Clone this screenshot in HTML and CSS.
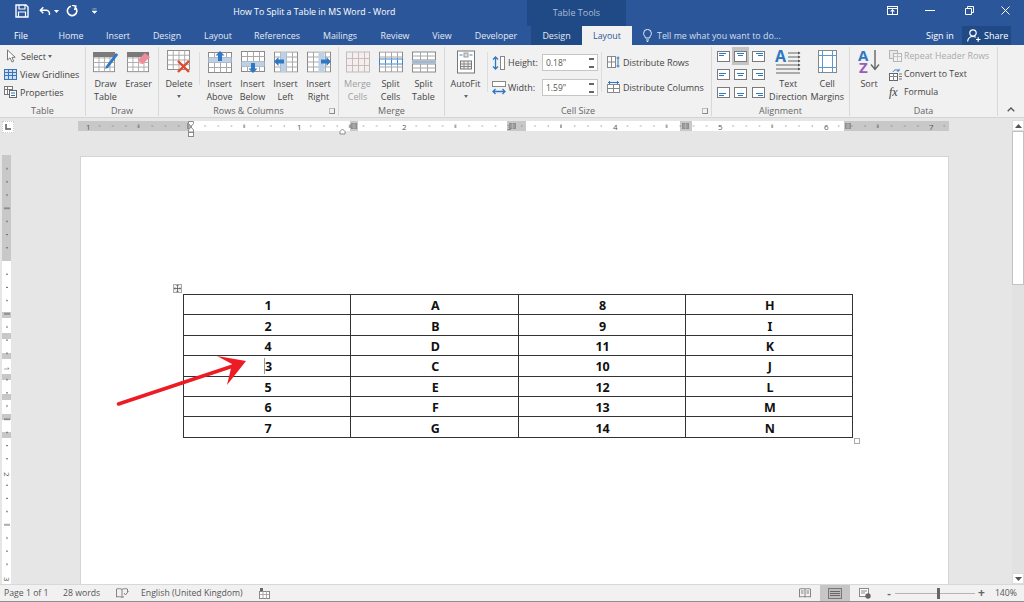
FILE: index.html
```html
<!DOCTYPE html>
<html lang="en">
<head>
<meta charset="utf-8">
<title>How To Split a Table in MS Word - Word</title>
<link rel="stylesheet" href="styles.css">
</head>
<body>
<svg class="defs" width="0" height="0" aria-hidden="true">
  <defs>
    <symbol id="grid" viewBox="0 0 24 21">
      <rect x=".5" y=".5" width="23" height="20" fill="#fff" stroke="#8a8a8a"/>
      <path d="M.5 5.5h23M.5 10.5h23M.5 15.5h23M6.5.5v20M12.5.5v20M18.5.5v20" stroke="#a8a8a8" fill="none"/>
    </symbol>
    <symbol id="al" viewBox="0 0 13 11">
      <rect x=".5" y=".5" width="12" height="10" fill="#fff" stroke="#7a7a7a"/>
    </symbol>
  </defs>
</svg>

<header class="titlebar">
  <div class="toprow">
    <div class="qat">
      <svg class="ic-save" width="14" height="14" viewBox="0 0 14 14"><path d="M1 1h10l2 2v10H1z" fill="none" stroke="#fff" stroke-width="1.4"/><path d="M4 1v4h6V1M3.500 13V8h7v5" fill="none" stroke="#fff" stroke-width="1.2"/></svg>
      <svg class="ic-undo" width="12" height="11" viewBox="0 0 14 12"><path d="M1.500 4.500h7a4 4 0 0 1 3.500 5.500M5 1 1.500 4.500 5 8" fill="none" stroke="#fff" stroke-width="1.7"/></svg>
      <svg class="ic-drop" width="5" height="3" viewBox="0 0 5 3"><path d="M0 0h5L2.500 3z" fill="#fff"/></svg>
      <svg class="ic-redo" width="12" height="12" viewBox="0 0 12 12"><path d="M9.500 2.600A4.700 4.700 0 1 1 5 1.300M6 0 9.800 1.200 8.600 5" fill="none" stroke="#fff" stroke-width="1.600"/></svg>
      <svg class="ic-cust" width="5" height="6" viewBox="0 0 6 6"><path d="M.5 .5h5M0 3h6l-3 3z" fill="#fff" stroke="#fff" stroke-width=".6"/></svg>
    </div>
    <div class="doctitle">How To Split a Table in MS Word - Word</div>
    <div class="tooltitle">Table Tools</div>
    <div class="winctl">
      <svg width="11" height="9" viewBox="0 0 11 9"><rect x=".5" y=".5" width="10" height="8" fill="none" stroke="#fff"/><path d="M0 2.500h11" stroke="#fff"/><path d="M5.500 3 8 5.500H3zM5 5h1v3H5z" fill="#fff"/></svg>
      <svg class="c-min" width="10" height="1" viewBox="0 0 10 1"><path d="M0 .5h10" stroke="#fff"/></svg>
      <svg class="c-res" width="9" height="9" viewBox="0 0 9 9"><path d="M2.500 2V.5h6v6H7M.5 2.500h6v6h-6z" fill="none" stroke="#fff"/></svg>
      <svg class="c-cls" width="9" height="9" viewBox="0 0 9 9"><path d="M.5 .5l8 8M8.500 .5l-8 8" stroke="#fff"/></svg>
    </div>
  </div>
  <nav class="tabrow">
    <div class="tabs">
      <a class="tab tab-file">File</a><a class="tab">Home</a><a class="tab">Insert</a><a class="tab">Design</a><a class="tab">Layout</a><a class="tab">References</a><a class="tab">Mailings</a><a class="tab">Review</a><a class="tab">View</a><a class="tab">Developer</a><a class="tab tab-ctx">Design</a><a class="tab tab-active">Layout</a>
    </div>
    <div class="tell">
      <svg width="9" height="13" viewBox="0 0 9 13"><path d="M2.500 9C2 7 .6 6.500 .6 4.300a3.900 3.900 0 0 1 7.800 0C8.400 6.500 7 7 6.500 9zM3 11h3M3.800 12.500h1.400" fill="none" stroke="#fff" stroke-width=".9"/></svg>
      <span>Tell me what you want to do...</span>
    </div>
    <div class="signin">Sign in</div>
    <div class="share">
      <svg width="14" height="13" viewBox="0 0 14 13"><circle cx="6" cy="4" r="3.200" fill="none" stroke="#fff" stroke-width="1.200"/><path d="M.6 12.500c.4-3 2.500-5 5.400-5 1.300 0 2 .3 2.800.8M9 10.500h4.500M11.200 8.300v4.500" fill="none" stroke="#fff" stroke-width="1.200"/></svg>
      <span>Share</span>
    </div>
  </nav>
</header>

<section class="ribbon">
  <div class="group g-table">
    <div class="tools tools-col">
      <div class="small"><svg class="smi" width="10" height="14" viewBox="0 0 10 14"><path d="M1.500 1v10l2.500-2.200L6 13l1.700-.8L6 8.300h3.200z" fill="#fff" stroke="#777"/></svg><span class="sel">Select</span><i class="caret-d"></i></div>
      <div class="small"><svg class="smi" width="13" height="11" viewBox="0 0 13 11"><rect x=".5" y=".5" width="12" height="10" fill="#cfe0f2" stroke="#3b74b8"/><path d="M.5 3.500h12M.5 6.500h12M4.500 .5v10M8.500 .5v10" stroke="#3b74b8" fill="none"/></svg><span>View Gridlines</span></div>
      <div class="small"><svg class="smi" width="13" height="12" viewBox="0 0 13 12"><rect x=".5" y=".5" width="8" height="8" fill="#fff" stroke="#777"/><path d="M.5 3.500h8M3.500 .5v8" stroke="#777"/><rect x="5.500" y="4.500" width="7" height="7" fill="#fff" stroke="#666"/><path d="M7 7h4M7 9.500h4" stroke="#2f6fb5"/></svg><span>Properties</span></div>
    </div>
    <div class="glabel">Table</div>
  </div>

  <div class="group g-draw">
    <div class="tools">
      <div class="big"><svg width="26" height="22" viewBox="0 0 26 22"><use href="#grid" x="0" y="1" width="22" height="21"/><rect x="0" y="1" width="22" height="5" fill="#7a7a7a"/><path d="M13 15 23 2l2.200 1.700-10 13-3 1.300z" fill="#2f78c4"/></svg><span>Draw<br>Table</span></div>
      <div class="big"><svg width="24" height="22" viewBox="0 0 24 22"><use href="#grid" x="0" y="1" width="22" height="21"/><rect x="0" y="1" width="22" height="5" fill="#7a7a7a"/><path d="M11 9 18 2l5 4-7 7h-3z" fill="#ee8c9c"/><path d="M11 9l4 4h-2z" fill="#f7c6cd"/></svg><span>Eraser</span></div>
    </div>
    <div class="glabel">Draw</div>
  </div>

  <div class="group g-rows">
    <div class="tools">
      <div class="big big-del"><svg width="26" height="24" viewBox="0 0 26 24"><use href="#grid" x="1" y="0" width="23" height="20"/><path d="M12 11l11 11M23 11 12 22" stroke="#e0492e" stroke-width="2.400"/></svg><span>Delete</span><i class="caret-d mid"></i></div>
      <i class="vdiv"></i>
      <div class="big"><svg width="24" height="22" viewBox="0 0 24 22"><use href="#grid" x="0" y="1" width="24" height="21"/><rect x=".5" y="6.500" width="23" height="5" fill="#bcd0e6"/><path d="M12 0l4.500 4.500H14V10h-4V4.500H7.500z" fill="#2f78c4"/></svg><span>Insert<br>Above</span></div>
      <div class="big"><svg width="24" height="22" viewBox="0 0 24 22"><use href="#grid" x="0" y="0" width="24" height="21"/><rect x=".5" y="10.500" width="23" height="5" fill="#bcd0e6"/><path d="M12 22l-4.500-4.500H10V12h4v5.500h2.500z" fill="#2f78c4"/></svg><span>Insert<br>Below</span></div>
      <div class="big"><svg width="24" height="21" viewBox="0 0 24 21"><use href="#grid" x="0" y="0" width="24" height="21"/><rect x="6.500" y=".5" width="6" height="20" fill="#bcd0e6"/><path d="M0 10l4.500-4.500V8H10v4H4.500v2.500z" fill="#2f78c4"/></svg><span>Insert<br>Left</span></div>
      <div class="big"><svg width="24" height="21" viewBox="0 0 24 21"><use href="#grid" x="0" y="0" width="24" height="21"/><rect x="11.500" y=".5" width="6" height="20" fill="#bcd0e6"/><path d="M24 10l-4.500-4.500V8H14v4h5.500v2.500z" fill="#2f78c4"/></svg><span>Insert<br>Right</span></div>
    </div>
    <div class="glabel">Rows &amp; Columns</div>
    <i class="launcher"></i>
  </div>

  <div class="group g-merge">
    <div class="tools">
      <div class="big off"><svg width="24" height="21" viewBox="0 0 24 21"><rect x=".5" y=".5" width="23" height="20" fill="#f4eeee" stroke="#bdbdbd"/><path d="M.5 7h23M.5 14h23M6.500 .5v20M12.500 .5v20M18.500 .5v20" stroke="#c9bcbc"/></svg><span>Merge<br>Cells</span></div>
      <div class="big"><svg width="24" height="21" viewBox="0 0 24 21"><use href="#grid" x="0" y="0" width="24" height="21"/><rect x=".5" y="7.500" width="23" height="5" fill="#fff" stroke="#3f86cf"/><path d="M6.500 8v4M12.500 8v4M18.500 8v4" stroke="#3f86cf"/></svg><span>Split<br>Cells</span></div>
      <div class="big"><svg width="24" height="21" viewBox="0 0 24 21"><rect x=".5" y=".5" width="23" height="8" fill="#fff" stroke="#8a8a8a"/><rect x=".5" y="12.500" width="23" height="8" fill="#fff" stroke="#8a8a8a"/><path d="M0 10.500h24" stroke="#3f86cf"/><path d="M8.500 .5v8M15.500 .5v8M8.500 12.500v8M15.500 12.500v8M.5 4.500h23M.5 16.500h23" stroke="#a8a8a8"/></svg><span>Split<br>Table</span></div>
    </div>
    <div class="glabel">Merge</div>
  </div>

  <div class="group g-size">
    <div class="tools">
      <div class="big big-fit"><svg width="18" height="23" viewBox="0 0 18 23"><rect x=".5" y=".5" width="17" height="22" fill="#fff" stroke="#777"/><path d="M2.500 4.500h3M12.500 4.500h3" stroke="#3f86cf"/><rect x="7" y="2.500" width="4" height="4" fill="#ddd" stroke="#999"/><rect x="3.500" y="10.500" width="11" height="8" fill="#eee" stroke="#777"/><path d="M3.500 13.500h11M3.500 16h11M7 10.500v8M11 10.500v8" stroke="#888"/></svg><span>AutoFit</span><i class="caret-d mid"></i></div>
      <i class="vdiv tall"></i>
      <div class="sizes">
        <div class="sizerow">
          <svg width="14" height="14" viewBox="0 0 14 14"><rect x="8.500" y=".5" width="4" height="13" fill="#fff" stroke="#888"/><path d="M3.500 1v12M1 3.500 3.500 1 6 3.500M1 10.500 3.500 13 6 10.500" fill="none" stroke="#2f78c4" stroke-width="1.300"/></svg>
          <label class="sizelab">Height:</label>
          <div class="spin"><span>0.18"</span><i class="updown"></i></div>
        </div>
        <div class="sizerow">
          <svg width="14" height="14" viewBox="0 0 14 14"><rect x=".5" y=".5" width="13" height="5" fill="#fff" stroke="#888"/><path d="M1 10.500h12M3.500 8 1 10.500 3.500 13M10.500 8 13 10.500 10.500 13" fill="none" stroke="#2f78c4" stroke-width="1.300"/></svg>
          <label class="sizelab">Width:</label>
          <div class="spin"><span>1.59"</span><i class="updown"></i></div>
        </div>
      </div>
      <i class="vdiv tall"></i>
      <div class="dists">
        <div class="small"><svg class="smi" width="13" height="12" viewBox="0 0 13 12"><rect x=".5" y=".5" width="8" height="11" fill="#fff" stroke="#888"/><path d="M.5 6h8M4.500 .5v11" stroke="#888"/><path d="M11 .5v11M9.500 2h3M9.500 10h3" stroke="#2f78c4"/></svg><span>Distribute Rows</span></div>
        <div class="small"><svg class="smi" width="13" height="12" viewBox="0 0 13 12"><rect x=".5" y="3.500" width="12" height="8" fill="#fff" stroke="#888"/><path d="M.5 7.500h12M6.500 3.500v8" stroke="#888"/><path d="M1 1.500h11M2.500 0v3M10.500 0v3" stroke="#2f78c4"/></svg><span>Distribute Columns</span></div>
      </div>
    </div>
    <div class="glabel">Cell Size</div>
    <i class="launcher"></i>
  </div>

  <div class="group g-align">
    <div class="tools">
      <div class="agrid">
        <div class="acell"><svg width="13" height="11" viewBox="0 0 13 11"><use href="#al" width="13" height="11"/><path d="M2 2.500h7M2 4.500h5" stroke="#2f78c4"/></svg></div>
        <div class="acell acell-on"><svg width="13" height="11" viewBox="0 0 13 11"><use href="#al" width="13" height="11"/><path d="M3 2.500h7M4 4.500h5" stroke="#2f78c4"/></svg></div>
        <div class="acell"><svg width="13" height="11" viewBox="0 0 13 11"><use href="#al" width="13" height="11"/><path d="M4 2.500h7M6 4.500h5" stroke="#2f78c4"/></svg></div>
        <div class="acell"><svg width="13" height="11" viewBox="0 0 13 11"><use href="#al" width="13" height="11"/><path d="M2 4.500h7M2 6.500h5" stroke="#2f78c4"/></svg></div>
        <div class="acell"><svg width="13" height="11" viewBox="0 0 13 11"><use href="#al" width="13" height="11"/><path d="M3 4.500h7M4 6.500h5" stroke="#2f78c4"/></svg></div>
        <div class="acell"><svg width="13" height="11" viewBox="0 0 13 11"><use href="#al" width="13" height="11"/><path d="M4 4.500h7M6 6.500h5" stroke="#2f78c4"/></svg></div>
        <div class="acell"><svg width="13" height="11" viewBox="0 0 13 11"><use href="#al" width="13" height="11"/><path d="M2 6.500h7M2 8.500h5" stroke="#2f78c4"/></svg></div>
        <div class="acell"><svg width="13" height="11" viewBox="0 0 13 11"><use href="#al" width="13" height="11"/><path d="M3 6.500h7M4 8.500h5" stroke="#2f78c4"/></svg></div>
        <div class="acell"><svg width="13" height="11" viewBox="0 0 13 11"><use href="#al" width="13" height="11"/><path d="M4 6.500h7M6 8.500h5" stroke="#2f78c4"/></svg></div>
      </div>
      <div class="big big-text"><svg width="26" height="31" viewBox="0 -6 26 31"><text class="a-glyph" x="0" y="13">A</text><path d="M13 4h12M13 8h12M13 12h12M1 16h24M1 20h24M1 24h24" stroke="#666" fill="none"/><path d="M23 2.500 25.500 4 23 5.500zM23 6.500 25.500 8 23 9.500zM23 10.500 25.500 12 23 13.500zM23 14.500 25.500 16 23 17.500zM23 18.500 25.500 20 23 21.500z" fill="#555"/></svg><span>Text<br>Direction</span></div>
      <div class="big big-cell"><svg width="19" height="23" viewBox="0 0 19 23"><rect x=".5" y=".5" width="18" height="22" fill="#fff" stroke="#888"/><path d="M4.500 .5v22M14.500 .5v22M.5 5.500h18M.5 17.500h18" stroke="#5c97d4"/></svg><span>Cell<br>Margins</span></div>
    </div>
    <div class="glabel">Alignment</div>
  </div>

  <div class="group g-data">
    <div class="tools">
      <div class="big big-sort"><svg width="22" height="34" viewBox="0 -6 22 34"><text class="az a1" x="0" y="12">A</text><text class="az z1" x="1" y="23.500">Z</text><path d="M17 1v19M13 15.500l4 5 4-5" fill="none" stroke="#666" stroke-width="1.400"/></svg><span>Sort</span></div>
      <div class="datacol">
        <div class="small off"><svg class="smi" width="13" height="12" viewBox="0 0 13 12"><rect x=".5" y=".5" width="8" height="8" fill="#e8e8e8" stroke="#b5b5b5"/><rect x="4.500" y="3.500" width="8" height="8" fill="#f3f3f3" stroke="#b5b5b5"/><path d="M4.500 6.500h8M8.500 3.500v8" stroke="#c5c5c5"/></svg><span>Repeat Header Rows</span></div>
        <div class="small"><svg class="smi" width="13" height="13" viewBox="0 0 13 13"><rect x=".5" y="5.500" width="8" height="7" fill="#fff" stroke="#666"/><path d="M.5 8.500h8M4.500 5.500v7" stroke="#888"/><path d="M4 4C5 1.500 8 1 10 3M10 .8V3H7.800" fill="none" stroke="#2f78c4"/><path d="M10 6h3M10 8.500h3M10 11h3" stroke="#777"/></svg><span>Convert to Text</span></div>
        <div class="small"><i class="fx">fx</i><span>Formula</span></div>
      </div>
    </div>
    <div class="glabel">Data</div>
  </div>

  <div class="collapse"><svg width="8" height="5" viewBox="0 0 8 5"><path d="M.7 4.300 4 1l3.300 3.300" fill="none" stroke="#555" stroke-width="1.300"/></svg></div>
</section>

<main class="workspace">
  <div class="corner"><div class="tabstop"><svg width="6" height="6" viewBox="0 0 6 6"><path d="M1 0v5h5" fill="none" stroke="#555" stroke-width="1.500"/></svg></div></div>
  <div class="hruler">
    <svg width="871" height="18" viewBox="0 0 871 18">
      <defs>
        <pattern id="ht" patternUnits="userSpaceOnUse" x="113.400" y="0" width="105.600" height="10">
          <path d="M13.200 5h1M26.400 5h1M39.600 5h1M66 5h1M79.200 5h1M92.400 5h1" stroke="#666"/><path d="M52.800 3.500v3.500" stroke="#555"/>
        </pattern>
      </defs>
      <rect x="0" y="0" width="113" height="10" fill="#c8c8c8"/>
      <rect x="113" y="0" width="159" height="10" fill="#fff"/>
      <rect x="272" y="0" width="8" height="10" fill="#c8c8c8"/>
      <rect x="280" y="0" width="149" height="10" fill="#fff"/>
      <rect x="429" y="0" width="19" height="10" fill="#c8c8c8"/>
      <rect x="448" y="0" width="154" height="10" fill="#fff"/>
      <rect x="602" y="0" width="12" height="10" fill="#c8c8c8"/>
      <rect x="614" y="0" width="152" height="10" fill="#fff"/>
      <rect x="766" y="0" width="105" height="10" fill="#c8c8c8"/>
      <rect x="0" y="0" width="871" height="10" fill="url(#ht)"/>
      <g class="rnum">
        <text x="8" y="8.500">1</text><text x="219" y="8.500">1</text><text x="324" y="8.500">2</text><text x="429" y="8.500">3</text><text x="535" y="8.500">4</text><text x="640" y="8.500">5</text><text x="746" y="8.500">6</text><text x="851" y="8.500">7</text>
      </g>
      <path d="M109 2h5v6h-5zM273 2h6v6h-6zM431 2h7v6h-7zM604 2h7v6h-7zM767 2h6v6h-6z" fill="#8f8f8f"/>
      <path d="M110 4h3M110 6h3M274 4h4M274 6h4M432 4h5M432 6h5M605 4h5M605 6h5M768 4h4M768 6h4M111.500 2v6M276 2v6M434.500 2v6M607.500 2v6M770 2v6" stroke="#c8c8c8" stroke-width=".5"/>
      <path d="M110.500 .5h5v2l-2.500 3-2.500-3zM113 6l2.500 3v2h-5V9z" fill="#fff" stroke="#8a8a8a"/>
      <rect x="110.500" y="11.500" width="5" height="4" fill="#fff" stroke="#8a8a8a"/>
      <path d="M262 10.500l2.500-2.500 2.500 2.500v2.500h-5z" fill="#fff" stroke="#8a8a8a"/>
    </svg>
  </div>
  <aside class="scroll">
    <div class="sc-btn"><svg width="7" height="4" viewBox="0 0 7 4"><path d="M3.500 0 7 4H0z" fill="#555"/></svg></div>
    <div class="sc-thumb"></div>
    <div class="sc-track"></div>
    <div class="sc-btn"><svg width="7" height="4" viewBox="0 0 7 4"><path d="M3.500 4 7 0H0z" fill="#555"/></svg></div>
  </aside>
  <div class="vruler">
    <svg width="10" height="430" viewBox="0 0 10 430">
      <defs>
        <pattern id="vt" patternUnits="userSpaceOnUse" x="0" y="106" width="10" height="105.500">
          <path d="M4 13.200h2M4 26.400h2M4 39.600h2M4 66h2M4 79.200h2M4 92.400h2" stroke="#666"/><path d="M2 52.800h6" stroke="#555"/>
        </pattern>
      </defs>
      <rect width="9" height="106" fill="#c8c8c8"/>
      <rect y="106" width="9" height="324" fill="#fff"/>
      <path d="M0 157h9v6H0zM0 178h9v6H0zM0 198h9v6H0zM0 219h9v6H0zM0 239h9v6H0zM0 259h9v6H0zM0 277h9v6H0z" fill="#c8c8c8"/>
      <rect width="10" height="430" fill="url(#vt)"/>
      <g class="rnum">
        <text transform="translate(2 211.500) rotate(90)">1</text>
        <text transform="translate(2 317) rotate(90)">2</text>
        <text transform="translate(2 422) rotate(90)">3</text>
      </g>
    </svg>
  </div>
  <div class="page">
    <div class="tablewrap">
      <span class="move"><svg width="7" height="7" viewBox="0 0 7 7"><path d="M3.500 0v7M0 3.500h7M2.500 1 3.500 0l1 1M2.500 6l1 1 1-1M1 2.500 0 3.500l1 1M6 2.500l1 1-1 1" fill="none" stroke="#555" stroke-width=".8"/></svg></span>
      <table class="doc">
        <tbody>
          <tr><td>1</td><td>A</td><td>8</td><td>H</td></tr>
          <tr><td>2</td><td>B</td><td>9</td><td>I</td></tr>
          <tr><td>4</td><td>D</td><td>11</td><td>K</td></tr>
          <tr><td><i class="ibeam"></i>3</td><td>C</td><td>10</td><td>J</td></tr>
          <tr><td>5</td><td>E</td><td>12</td><td>L</td></tr>
          <tr><td>6</td><td>F</td><td>13</td><td>M</td></tr>
          <tr><td>7</td><td>G</td><td>14</td><td>N</td></tr>
        </tbody>
      </table>
      <span class="resize"></span>
    </div>
    <svg class="arrow" width="145" height="65" viewBox="0 0 145 65"><path d="M8.500 58 123 20" stroke="#ed1c24" stroke-width="3.600" stroke-linecap="round"/><path d="M107 10l29 5-19 24 5-21z" fill="#ed1c24"/></svg>
  </div>
</main>

<footer class="status">
  <span class="st st-page">Page 1 of 1</span>
  <span class="st st-words">28 words</span>
  <svg class="st-book" width="13" height="10" viewBox="0 0 13 10"><path d="M6 1.500C5 .5 2 .5 .5 1v8C2 8.500 5 8.500 6 9.500M6 1.500V9.500M6 1.500C7 .5 10 .5 11.500 1v3M6 9.500c.5-.4 1-.6 2-.8M8 5l1.500 2L12.500 3" fill="none" stroke="#777" stroke-width=".9"/></svg>
  <span class="st st-lang">English (United Kingdom)</span>
  <svg class="st-macro" width="11" height="11" viewBox="0 0 11 11"><rect x=".5" y="3.500" width="10" height="7" fill="#fff" stroke="#888"/><path d="M.5 6.500h10M4 3.500v7M7.500 3.500v7" stroke="#aaa"/><rect x="1" y="0" width="3" height="3" fill="#666"/></svg>
  <div class="st-right">
    <svg class="vw-read" width="12" height="10" viewBox="0 0 12 10"><path d="M6 1C5 .5 2 .5 .5 1v8C2 8.500 5 8.500 6 9c1-.5 4-.5 5.500 0V1C10 .5 7 .5 6 1zM6 1v8M2 3h2.500M2 5h2.500M7.500 3H10M7.500 5H10" fill="none" stroke="#777" stroke-width=".9"/></svg>
    <div class="vw-print"><svg width="14" height="11" viewBox="0 0 14 11"><rect x=".5" y=".5" width="13" height="10" fill="#bdbdbd" stroke="#777"/><path d="M2 3.500h10M2 5.500h10M2 7.500h10" stroke="#666"/></svg></div>
    <svg class="vw-web" width="12" height="11" viewBox="0 0 12 11"><rect x=".5" y=".5" width="9" height="8" fill="#fff" stroke="#888"/><path d="M2 3h6M2 5h4" stroke="#888"/><circle cx="9" cy="8" r="2.700" fill="#666"/></svg>
    <span class="zm zm-minus">-</span>
    <div class="slider"><i class="thumb"></i></div>
    <span class="zm zm-plus">+</span>
    <span class="st zm-val">140%</span>
  </div>
</footer>
</body>
</html>
```

FILE: styles.css
```css
* { box-sizing: border-box; }
html, body { margin: 0; padding: 0; }
body {
  width: 1024px;
  height: 602px;
  overflow: hidden;
  display: flex;
  flex-direction: column;
  background: #e6e6e6;
  font-family: "Open Sans", "Noto Sans", sans-serif;
  font-size: 9px;
  color: #444;
}
svg { display: block; flex: none; }
.defs { position: absolute; }

/* title bar */
.titlebar { height: 45px; background: #2b579a; color: #fff; flex: none; }
.toprow { height: 26px; display: flex; align-items: stretch; }
.qat { width: 234px; display: flex; align-items: center; padding: 0 0 4px 15px; }
.ic-undo { margin-left: 10px; }
.ic-drop { margin-left: 3px; }
.ic-redo { margin-left: 7px; }
.ic-cust { margin-left: 14px; }
.doctitle { width: 297px; padding-left: 1px; line-height: 25px; font-size: 8.800px; color: #fff; }
.tooltitle { width: 100px; background: #1f4a85; color: #a9bcd8; text-align: center; line-height: 25px; font-size: 9px; }
.winctl { flex: 1; display: flex; align-items: center; padding: 0 14px 6px 261px; }
.c-min { margin-left: 27px; }
.c-res { margin-left: 30px; }
.c-cls { margin-left: 27px; }

.tabrow { height: 19px; display: flex; align-items: stretch; }
.tabs { display: grid; grid-template-columns: 45px 52px 42px 56px 46px 72px 54px 56px 38px 70px 51px 50px; }
.tab { text-align: center; line-height: 19px; font-size: 8.900px; color: #e4eaf3; }
.tab-file { padding-right: 3px; color: #fff; }
.tab-ctx { background: #1f4a85; }
.tab-active { background: #f1f1f1; color: #2b579a; }
.tell { width: 294px; display: flex; align-items: center; padding-left: 11px; gap: 5px; color: #d5deec; font-size: 8.900px; }
.signin { width: 36px; line-height: 19px; font-size: 9px; color: #fff; white-space: nowrap; }
.share { width: 49px; background: #1f4a85; display: flex; align-items: center; gap: 3px; padding-left: 5px; font-size: 9px; }

/* ribbon */
.ribbon { height: 73px; background: #f1f1f1; flex: none; display: flex; border-bottom: 1px solid #d4d4d4; padding-top: 2px; }
.group { position: relative; display: flex; flex-direction: column; height: 69px; border-right: 1px solid #d8d8d8; }
.tools { height: 57px; display: flex; align-items: flex-start; }
.tools-col { flex-direction: column; }
.glabel { height: 12px; text-align: center; line-height: 13px; color: #666; font-size: 9px; white-space: nowrap; }
.g-table { width: 86px; }
.g-draw { width: 73px; }
.g-rows { width: 180px; }
.g-merge { width: 106px; }
.g-size { width: 267px; }
.g-align { width: 138px; }
.g-data { width: 148px; }
.g-draw .tools { padding-left: 3px; }
.g-merge .tools { padding-left: 2px; }

.small { height: 18px; display: flex; align-items: center; white-space: nowrap; color: #444; }
.small.off { color: #aaa; }
.smi { margin-right: 3px; }
.g-table .tools-col { padding: 0 0 0 4px; }
.g-table .small:first-child .smi { margin: 0 5px 0 2px; }
.datacol .smi, .datacol .fx { margin-right: 2px; }
.datacol .small { font-size: 8.800px; }
.caret-d { display: block; width: 0; height: 0; border: 2px solid transparent; border-top: 3px solid #666; border-bottom: 0; margin-left: 2px; }
.big { width: 33px; display: flex; flex-direction: column; align-items: center; text-align: center; line-height: 13px; color: #444; white-space: nowrap; }
.big svg { height: 24px; margin-top: 3px; margin-bottom: 3px; }
.big.off { color: #a0a0a0; }
.caret-d.mid { margin: 5px 0 0; }
.big-del { width: 40px; }
.vdiv { display: block; width: 1px; height: 33px; margin: 5px 3px 0 0; background: #ddd; flex: none; }
.vdiv.tall { height: 40px; margin: 5px 0 0; }
.big-fit { width: 41px; margin-right: 1px; }
.sizes { width: 113px; padding: 7px 0 0 4px; display: flex; flex-direction: column; gap: 8px; }
.sizerow { height: 17px; display: flex; align-items: center; }
.sizelab { width: 34px; margin-left: 2px; font-size: 9px; color: #444; }
.spin { width: 56px; height: 17px; background: #fff; border: 1px solid #c6c6c6; display: flex; align-items: center; justify-content: space-between; padding: 0 3px; color: #555; font-size: 8.500px; }
.updown { display: block; width: 5px; height: 10px; background: linear-gradient(#666,#666) top/100% 2px no-repeat, linear-gradient(#666,#666) bottom/100% 2px no-repeat; }
.dists { padding: 6px 0 0 5px; display: flex; flex-direction: column; gap: 7px; }
.launcher { position: absolute; right: 3px; bottom: 2px; width: 6px; height: 6px; border: 1px solid #888; border-top-color: #bbb; border-left-color: #bbb; }

.agrid { width: 52.500px; margin: 0 0 0 2.250px; display: grid; grid-template-columns: repeat(3, 17.500px); grid-auto-rows: 18px; }
.acell { display: flex; align-items: center; justify-content: center; }
.acell-on { background: #c4c4c4; }
.big-text { width: 43px; }
.big-cell { width: 35px; }
.big-text svg { height: 31px; margin-top: -4px; margin-bottom: 2.500px; }
.big-cell svg { height: 25px; margin-top: 2px; margin-bottom: 3px; }
.a-glyph { font: bold 16px "Open Sans", sans-serif; fill: #2f78c4; }
.big-sort { width: 28px; margin: 0 6px 0 5px; }
.big-sort svg { height: 34px; margin-top: -4px; margin-bottom: -.500px; }
.az { font: bold 15px "Open Sans", sans-serif; }
.a1 { fill: #2f78c4; }
.z1 { fill: #9a5cb8; }
.datacol { display: flex; flex-direction: column; }
.fx { width: 13px; font: italic 12px "Liberation Serif", serif; color: #444; }
.collapse { width: 26px; display: flex; align-items: flex-end; justify-content: center; padding-bottom: 4px; height: 69px; }

/* workspace */
.workspace { flex: 1; min-height: 0; display: grid; grid-template-columns: 80px 869px 63px 12px; grid-template-rows: 38px 1fr; background: #e6e6e6; }
.corner { padding: 3px 0 0 2px; }
.tabstop { width: 12px; height: 12px; background: #fff; border: 1px dotted #ccc; display: flex; align-items: center; justify-content: center; }
.hruler { padding-top: 3px; margin-left: -2px; grid-column: 2 / 3; }
.scroll { grid-column: 4; grid-row: 1 / 3; padding-top: 2px; display: flex; flex-direction: column; }
.sc-btn { height: 11px; background: #fff; display: flex; align-items: center; justify-content: center; border: 1px solid #ddd; }
.sc-thumb { height: 154px; background: #fff; border: 1px solid #c2c2c2; }
.sc-track { flex: 1; background: #e2e2e2; }
.vruler { grid-row: 2; padding: 0 0 0 2px; margin-top: -1px; overflow: hidden; }
.page { position: relative; grid-row: 2; grid-column: 2; background: #fff; border-left: 1px solid #d4d4d4; border-right: 1px solid #d4d4d4; border-top: 1px solid #d4d4d4; padding: 137px 0 0 102px; overflow: hidden; }
.tablewrap { position: relative; width: 670px; }
.doc { width: 670px; border-collapse: collapse; table-layout: fixed; }
.doc tr { height: 20.400px; }
.doc td { border: 1px solid #333; padding: 2px 0 0 2px; text-align: center; font: bold 12.500px/17px "Noto Sans", sans-serif; color: #111; }
.ibeam { display: inline-block; width: 0; height: 16px; border-left: 1px solid #999; vertical-align: top; }
.move { position: absolute; left: -10px; top: -10px; width: 9px; height: 9px; background: #f3f3f3; border: 1px solid #aaa; display: flex; align-items: center; justify-content: center; }
.resize { position: absolute; right: -7px; bottom: -6px; width: 6px; height: 6px; background: #fff; border: 1px solid #aaa; }
.arrow { position: absolute; left: 29px; top: 189px; }
.rnum text { font: 8px "Open Sans", sans-serif; fill: #555; }

/* status */
.status { height: 18px; flex: none; background: #f1f1f1; border-top: 1px solid #d8d8d8; border-bottom: 1px solid #8f8f8f; display: flex; align-items: center; padding-left: 4px; }
.st { color: #555; white-space: nowrap; font-size: 8.700px; }
.st-page { width: 59px; }
.st-words { width: 53px; }
.st-book { margin-right: 12px; }
.st-lang { width: 118px; }
.st-right { margin-left: auto; display: flex; align-items: center; height: 16px; padding-right: 7px; }
.vw-read { margin-right: 9px; }
.vw-print { width: 30px; height: 16px; background: #c6c6c6; display: flex; align-items: center; justify-content: center; margin-right: 9px; }
.zm { font-size: 11px; font-weight: 700; color: #666; line-height: 14px; width: 6px; text-align: center; }
.zm-minus { margin-left: 15px; }
.slider { position: relative; width: 80px; height: 1px; background: #b5b5b5; margin: 0 3px; }
.thumb { position: absolute; left: 42px; top: -5px; width: 3px; height: 11px; background: #666; }
.zm-plus { font-size: 12px; }
.zm-val { margin-left: 11px; }
```
